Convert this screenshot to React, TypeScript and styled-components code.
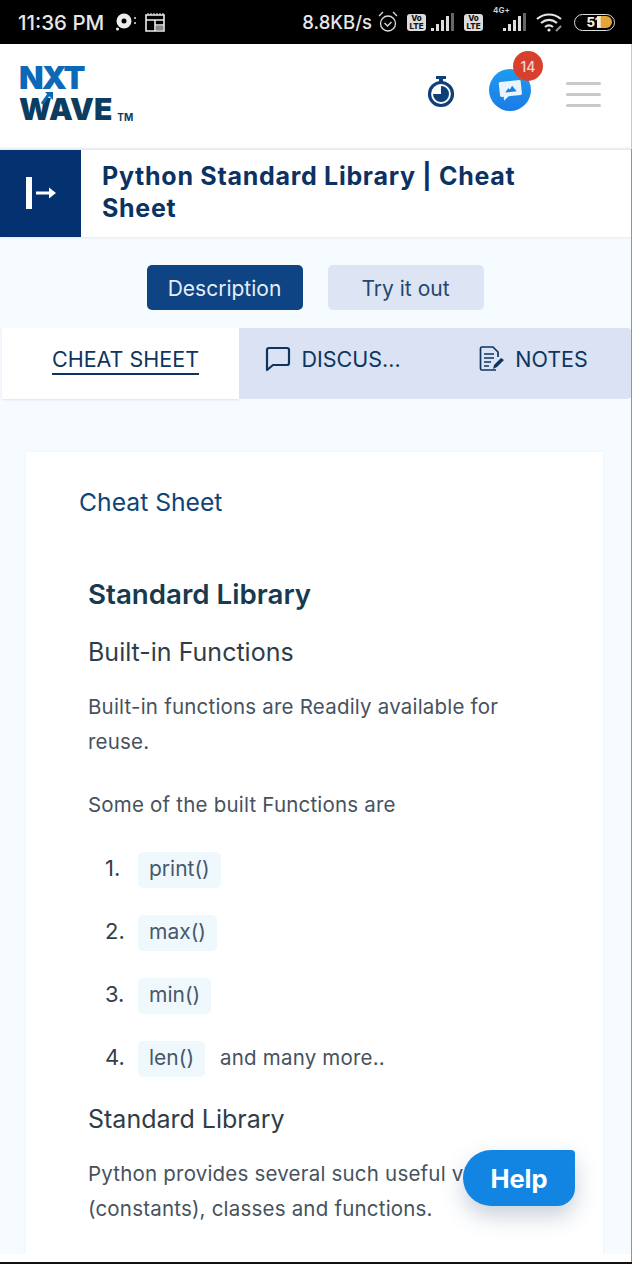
import * as React from 'react'
import styled, { createGlobalStyle } from 'styled-components'

const GlobalStyle = createGlobalStyle`
  html, body {
    margin: 0;
    padding: 0;
    background: #f6fbff;
    font-family: Inter, "Noto Sans", sans-serif;
  }
  * {
    box-sizing: border-box;
  }
`

const Page = styled.div`
  position: relative;
  width: 632px;
  height: 1264px;
  overflow: hidden;
  display: flex;
  flex-direction: column;
  background: #f6fbff;
`

const StatusBar = styled.div`
  height: 44px;
  flex: none;
  background: #000;
  color: #e6e6e6;
  display: flex;
  align-items: center;
  justify-content: space-between;
  padding: 0 17px 0 18px;
  font-weight: 500;
`

const StatusGroup = styled.div`
  display: flex;
  align-items: center;
`

const Clock = styled.span`
  font-size: 20.5px;
`

const Speed = styled.span`
  font-size: 18.5px;
`

const Slot = styled.span<{ $left: number }>`
  display: flex;
  margin-left: ${p => p.$left}px;
`

const Volte = styled.span`
  width: 19px;
  height: 17px;
  border-radius: 3px;
  background: #dcdcdc;
  color: #111;
  font-size: 8px;
  line-height: 8px;
  font-weight: 800;
  text-align: center;
  display: flex;
  flex-direction: column;
  justify-content: center;
`

const FourG = styled.span`
  position: relative;
  display: flex;
  width: 34px;
  justify-content: flex-end;
`

const FourGLabel = styled.span`
  position: absolute;
  left: 1px;
  top: -7px;
  font-size: 8px;
  line-height: 9px;
  font-weight: 700;
  color: #ccc;
`

const Battery = styled.div`
  position: relative;
  width: 41px;
  height: 17px;
  border: 1.5px solid #ddd;
  border-radius: 9px;
  overflow: hidden;
  display: flex;
  align-items: center;
  justify-content: center;
  padding-right: 2px;
`

const BatteryFill = styled.span`
  position: absolute;
  left: 22px;
  top: 1.5px;
  bottom: 1.5px;
  right: 2px;
  border-radius: 0 6px 6px 0;
  background: linear-gradient(90deg, #f1d9a4 0 25%, #e6a537 25% 100%);
`

const BatteryText = styled.span`
  position: relative;
  color: #f4efe3;
  font-size: 13px;
  font-weight: 800;
  line-height: 14px;
`

const Header = styled.header`
  height: 105px;
  flex: none;
  background: #fff;
  display: flex;
  align-items: center;
  justify-content: space-between;
  padding: 0 30px 5px 19px;
  border-right: 1px solid #c8c8c8;
`

const Logo = styled.div`
  font-weight: 900;
  margin-bottom: 2px;
`

const LogoTop = styled.div`
  color: #0b69b7;
  font-size: 32px;
  line-height: 30px;
  letter-spacing: -2px;
  height: 32px;
`

const LogoBottom = styled.div`
  position: relative;
  color: #0c3c60;
  font-size: 30px;
  line-height: 28px;
  display: flex;
  align-items: flex-end;
`

const LogoArrow = styled.svg`
  position: absolute;
  left: 22px;
  top: -4px;
`

const Tm = styled.span`
  font-size: 10px;
  line-height: 11px;
  font-weight: 700;
  margin-left: 5px;
`

const HeaderActions = styled.div`
  display: flex;
  align-items: center;
`

const Timer = styled.div`
  display: flex;
  margin-bottom: 4px;
`

const ChatButton = styled.div`
  position: relative;
  width: 42px;
  height: 42px;
  margin-left: 34px;
  margin-bottom: 8px;
  border-radius: 50%;
  background: linear-gradient(180deg, #1f9bef, #1a7ce6);
  display: flex;
  align-items: center;
  justify-content: center;
`

const Badge = styled.span`
  position: absolute;
  top: -18px;
  right: -12px;
  width: 30px;
  height: 30px;
  border-radius: 50%;
  background: #d8402e;
  color: #f3d7cf;
  font-size: 14px;
  font-weight: 500;
  display: flex;
  align-items: center;
  justify-content: center;
`

const Burger = styled.div`
  width: 35px;
  margin-left: 35px;
  display: flex;
  flex-direction: column;
  gap: 8px;
`

const BurgerLine = styled.span`
  height: 3px;
  border-radius: 2px;
  background: #c9c9c9;
`

const TitleBar = styled.div`
  height: 87px;
  flex: none;
  display: flex;
  background: #fff;
  box-shadow: 0 -2px 2px #e6e8ee, 0 1px 2px #e6e8ee;
  margin-top: 1px;
`

const TitleIcon = styled.div`
  width: 81px;
  flex: none;
  background: #04316f;
  display: flex;
  align-items: center;
  justify-content: center;
  padding-bottom: 2px;
`

const Title = styled.h1`
  margin: 0;
  padding: 10px 90px 0 21px;
  color: #0b3263;
  font-size: 25px;
  font-weight: 700;
  line-height: 32px;
  letter-spacing: 0.72px;
`

const ModeRow = styled.div`
  display: flex;
  justify-content: center;
  gap: 25px;
  padding: 28px 2px 18px 0;
`

const ModeButton = styled.button<{ $active?: boolean }>`
  width: 156px;
  height: 45px;
  border: 0;
  border-radius: 5px;
  padding: 1px 0 0;
  font-family: inherit;
  font-size: 21px;
  background: ${p => (p.$active ? '#0e4384' : '#dde4f4')};
  color: ${p => (p.$active ? '#e6eef8' : '#24466f')};
`

const Tabs = styled.div`
  height: 71px;
  flex: none;
  margin-left: 2px;
  display: flex;
  background: #dbe2f3;
  border-radius: 0 5px 5px 0;
`

const Tab = styled.div<{ $active?: boolean; $width: number }>`
  width: ${p => p.$width}px;
  flex: none;
  display: flex;
  align-items: center;
  justify-content: center;
  gap: 10px;
  padding-bottom: 10px;
  font-size: 21.5px;
  color: #0d3560;
  background: ${p => (p.$active ? '#fff' : 'transparent')};
  box-shadow: ${p => (p.$active ? '0 1px 2px #dbe2f3' : 'none')};
`

const ActiveTab = styled(Tab)`
  padding: 0 0 10px 10px;
`

const DiscussTab = styled(Tab)`
  padding: 0 14px 10px 0;
`

const NotesTab = styled(Tab)`
  padding: 0 5px 10px 0;
`

const TabLabel = styled.span<{ $active?: boolean }>`
  border-bottom: ${p => (p.$active ? '2px solid #0d3560' : '0')};
  padding-bottom: ${p => (p.$active ? '1px' : '0')};
  margin-top: ${p => (p.$active ? '3px' : '0')};
`

const Card = styled.main`
  margin: 53px 29px 0 26px;
  background: #fff;
  flex: 1;
  padding: 36px 60px 0 53px;
  min-height: 0;
  overflow: hidden;
  box-shadow: 0 0 4px #edf2f8;
`

const FooterStrip = styled.div`
  height: 10px;
  flex: none;
  background: #fff;
`

const CardTitle = styled.div`
  color: #0f4577;
  font-size: 24.7px;
  line-height: 29px;
  margin-bottom: 60px;
`

const Body = styled.div`
  margin-left: 9px;
  color: #47525e;
`

const H2 = styled.h2`
  margin: 0 0 26px;
  color: #173a4f;
  font-size: 27.7px;
  line-height: 34px;
  font-weight: 600;
`

const H3 = styled.h3<{ $top?: number }>`
  margin: ${p => p.$top ?? 0}px 0 22px;
  color: #2f3d49;
  font-size: 25px;
  line-height: 30px;
  font-weight: 400;
`

const Para = styled.p`
  margin: 0 0 28px;
  font-size: 20.5px;
  line-height: 35px;
  letter-spacing: 0.2px;
`

const List = styled.ol`
  list-style: none;
  margin: 0;
  padding: 0;
  display: flex;
  flex-direction: column;
  gap: 27px;
`

const Item = styled.li`
  display: flex;
  align-items: center;
  height: 36px;
  font-size: 21px;
`

const Num = styled.span`
  width: 50px;
  padding-left: 17px;
  font-size: 22px;
  color: #33404c;
`

const Code = styled.code`
  font-family: inherit;
  height: 36px;
  margin-top: 3px;
  padding: 0 11px 3px;
  border-radius: 5px;
  background: #eff8fd;
  color: #47586a;
  display: flex;
  align-items: center;
`

const After = styled.span`
  margin-left: 15px;
  font-size: 20.5px;
  letter-spacing: 0.2px;
`

const HelpButton = styled.div`
  position: absolute;
  left: 463px;
  top: 1150px;
  width: 112px;
  height: 56px;
  background: #1284e2;
  border-radius: 28px 4px 18px 28px;
  color: #fff;
  font-size: 25.5px;
  font-weight: 700;
  display: flex;
  align-items: center;
  justify-content: center;
  box-shadow: 0 10px 22px rgba(40, 70, 110, 0.25);
`

const RightEdge = styled.div`
  position: absolute;
  right: 0;
  top: 149px;
  bottom: 0;
  width: 1px;
  background: #8f959c;
`

const BottomEdge = styled.div`
  position: absolute;
  left: 0;
  right: 0;
  bottom: 0;
  height: 2px;
  background: #111;
`

const Stopwatch = () => (
  <svg width="28" height="32" viewBox="0 0 28 32">
    <rect x="9" y="0" width="10" height="3" fill="#0f3f78" />
    <rect x="12" y="2" width="4" height="5" fill="#0f3f78" />
    <circle cx="14" cy="18" r="11.500" fill="none" stroke="#0f3f78" strokeWidth="3.200" />
    <path d="M14 18V10a8 8 0 1 1-8 8z" fill="#0f3f78" />
  </svg>
)

const Chat = () => (
  <svg width="25" height="22" viewBox="0 0 25 22">
    <g transform="rotate(-6 12 11)">
      <path d="M3 2h19a1.500 1.500 0 0 1 1.500 1.500v12a1.500 1.500 0 0 1-1.500 1.500H10l-5 4v-4H3a1.500 1.500 0 0 1-1.500-1.500v-12A1.500 1.500 0 0 1 3 2z" fill="#e9f4fd" />
      <path d="M7 13l3.500-4 1.500 1.500 2.500-3.500 4 6z" fill="#1a7fdc" />
    </g>
  </svg>
)

const Expand = () => (
  <svg width="32" height="34" viewBox="0 0 32 34">
    <rect x="1" y="1" width="6" height="32" fill="#fff" />
    <rect x="11" y="15.500" width="15" height="3" fill="#fff" />
    <path d="M24 11.500l7 5.500-7 5.500z" fill="#fff" />
  </svg>
)

const Bubble = () => (
  <svg width="26" height="26" viewBox="0 0 26 26" fill="none" stroke="#0d3560" strokeWidth="2.200" strokeLinejoin="round">
    <path d="M4 2h18a2 2 0 0 1 2 2v13a2 2 0 0 1-2 2H8l-6 5V4a2 2 0 0 1 2-2z" />
  </svg>
)

const NoteIcon = () => (
  <svg width="26" height="26" viewBox="0 0 26 26" fill="none" stroke="#0d3560" strokeWidth="1.700">
    <path d="M17 24H3a1.500 1.500 0 0 1-1.500-1.500v-20A1.500 1.500 0 0 1 3 1h11l5 5v5" />
    <path d="M5 8h10M5 12h10M5 16h7M5 20h5" />
    <path d="M14 23l1-4 7-7 3 2-7 7z" fill="#0d3560" stroke="none" />
  </svg>
)

const Alarm = () => (
  <svg width="20" height="22" viewBox="0 0 20 22" fill="none" stroke="#ddd" strokeWidth="1.300">
    <circle cx="10" cy="12.500" r="7.500" />
    <path d="M6.500 12l3 3 4-4M1 5l4-4M19 5l-4-4" />
  </svg>
)

const Disc = () => (
  <svg width="22" height="20" viewBox="0 0 22 20">
    <circle cx="9" cy="9" r="7.500" fill="#eee" />
    <circle cx="9" cy="9" r="2.500" fill="#000" />
    <circle cx="2.500" cy="17" r="1.500" fill="#eee" />
    <rect x="19" y="5" width="2" height="2" fill="#aaa" />
    <rect x="19" y="10" width="2" height="2" fill="#aaa" />
  </svg>
)

const CalendarIcon = () => (
  <svg width="20" height="20" viewBox="0 0 20 20" fill="none" stroke="#eee" strokeWidth="1.600">
    <path d="M1 3h18v16H1zM1 8h18M10 8v11M10 13h9" />
    <path d="M3 1v2M6 1v2M9 1v2M12 1v2M15 1v2M18 1v2" strokeWidth="1" />
    <rect x="11" y="14" width="7" height="4" fill="#888" stroke="none" />
  </svg>
)

const Signal = () => (
  <svg width="23" height="18" viewBox="0 0 23 18" fill="#ddd">
    <rect x="0" y="15" width="3" height="3" />
    <rect x="5" y="11" width="3" height="7" />
    <rect x="10" y="7" width="3" height="11" />
    <rect x="15" y="3" width="3" height="15" />
    <rect x="20" y="0" width="3" height="18" fill="#666" />
  </svg>
)

const Wifi = () => (
  <svg width="27" height="20" viewBox="0 0 27 20" fill="none" stroke="#e6e6e6" strokeWidth="2.200">
    <path d="M1 7c7-6 17-6 24 0M5 11c5-4 11-4 16 0M9 15c2.500-2 5.500-2 8 0" />
    <circle cx="13" cy="18" r="1.600" fill="#e6e6e6" stroke="none" />
    <path d="M20 19l5-5" stroke="#999" strokeWidth="2" />
  </svg>
)

const App: React.FC = () => {
  return (
    <Page>
      <GlobalStyle />
      <StatusBar>
        <StatusGroup>
          <Clock>11:36 PM</Clock>
          <Slot $left={11}>
            <Disc />
          </Slot>
          <Slot $left={8}>
            <CalendarIcon />
          </Slot>
        </StatusGroup>
        <StatusGroup>
          <Speed>8.8KB/s</Speed>
          <Slot $left={6}>
            <Alarm />
          </Slot>
          <Slot $left={9}>
            <Volte>
              <span>Vo</span>
              <span>LTE</span>
            </Volte>
          </Slot>
          <Slot $left={5}>
            <Signal />
          </Slot>
          <Slot $left={10}>
            <Volte>
              <span>Vo</span>
              <span>LTE</span>
            </Volte>
          </Slot>
          <Slot $left={9}>
            <FourG>
              <FourGLabel>4G+</FourGLabel>
              <Signal />
            </FourG>
          </Slot>
          <Slot $left={10}>
            <Wifi />
          </Slot>
          <Slot $left={11}>
            <Battery>
              <BatteryFill />
              <BatteryText>51</BatteryText>
            </Battery>
          </Slot>
        </StatusGroup>
      </StatusBar>

      <Header>
        <Logo>
          <LogoTop>NXT</LogoTop>
          <LogoBottom>
            WAVE<Tm>TM</Tm>
            <LogoArrow width="12" height="14" viewBox="0 0 12 14">
              <path d="M1 13L8 3" stroke="#0b69b7" strokeWidth="3" fill="none" />
              <path d="M4 1h8v8z" fill="#0b69b7" />
            </LogoArrow>
          </LogoBottom>
        </Logo>
        <HeaderActions>
          <Timer>
            <Stopwatch />
          </Timer>
          <ChatButton>
            <Chat />
            <Badge>14</Badge>
          </ChatButton>
          <Burger>
            <BurgerLine />
            <BurgerLine />
            <BurgerLine />
          </Burger>
        </HeaderActions>
      </Header>

      <TitleBar>
        <TitleIcon>
          <Expand />
        </TitleIcon>
        <Title>Python Standard Library | Cheat Sheet</Title>
      </TitleBar>

      <ModeRow>
        <ModeButton $active>Description</ModeButton>
        <ModeButton>Try it out</ModeButton>
      </ModeRow>

      <Tabs>
        <ActiveTab $active $width={237}>
          <TabLabel $active>CHEAT SHEET</TabLabel>
        </ActiveTab>
        <DiscussTab $width={202}>
          <Bubble />
          <span>DISCUS...</span>
        </DiscussTab>
        <NotesTab $width={190}>
          <NoteIcon />
          <span>NOTES</span>
        </NotesTab>
      </Tabs>

      <Card>
        <CardTitle>Cheat Sheet</CardTitle>
        <Body>
          <H2>Standard Library</H2>
          <H3>Built-in Functions</H3>
          <Para>Built-in functions are Readily available for reuse.</Para>
          <Para>Some of the built Functions are</Para>
          <List>
            <Item>
              <Num>1.</Num>
              <Code>print()</Code>
            </Item>
            <Item>
              <Num>2.</Num>
              <Code>max()</Code>
            </Item>
            <Item>
              <Num>3.</Num>
              <Code>min()</Code>
            </Item>
            <Item>
              <Num>4.</Num>
              <Code>len()</Code>
              <After>and many more..</After>
            </Item>
          </List>
          <H3 $top={29}>Standard Library</H3>
          <Para>Python provides several such useful values (constants), classes and functions.</Para>
        </Body>
      </Card>
      <FooterStrip />

      <HelpButton>Help</HelpButton>
      <RightEdge />
      <BottomEdge />
    </Page>
  )
}

export default App
